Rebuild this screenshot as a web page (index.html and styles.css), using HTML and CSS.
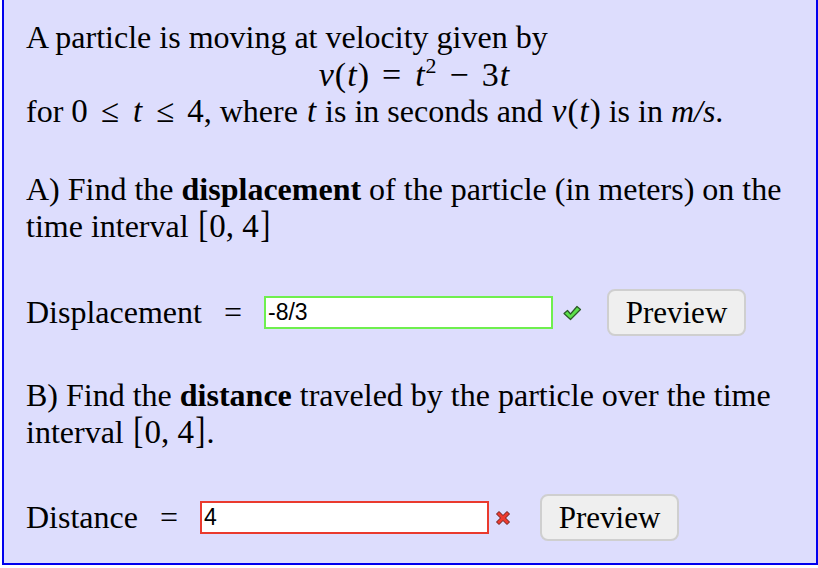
FILE: index.html
```html
<!DOCTYPE html>
<html>
<head>
<meta charset="utf-8">
<link rel="stylesheet" href="styles.css">
</head>
<body>
<div class="problem">
  <p class="intro">A particle is moving at velocity given by
    <span class="display"><span class="mi">v</span>(<span class="mi">t</span>)<span class="rel">=</span><span class="mi">t</span><sup>2</sup><span class="bin">−</span>3<span class="mi">t</span></span>
    for <span class="math">0<span class="rel">≤</span><span class="mi">t</span><span class="rel">≤</span>4</span>, where <span class="math"><span class="mi">t</span></span> is in seconds and <span class="math"><span class="mi">v</span>(<span class="mi">t</span>)</span> is in <i>m/s</i>.</p>

  <p class="part">A) Find the <b>displacement</b> of the particle (in meters) on the time interval <span class="math"><span class="br">[</span>0, 4<span class="br">]</span></span></p>

  <div class="answer-row">
    <span class="label">Displacement</span><span class="rel">=</span>
    <input class="answer correct" type="text" value="-8/3">
    <svg class="mark" width="20" height="18" viewBox="0 0 20 18"><path d="M2 9.5 L5.5 6.5 L8.5 10 L15 2.5 L18.5 5.5 L8.5 15.5 Z" fill="#5be04a" stroke="#2c5a28" stroke-width="1.2" stroke-linejoin="round"/></svg>
    <button class="preview">Preview</button>
  </div>

  <p class="part">B) Find the <b>distance</b> traveled by the particle over the time interval <span class="math"><span class="br">[</span>0, 4<span class="br">]</span></span>.</p>

  <div class="answer-row last">
    <span class="label">Distance</span><span class="rel">=</span>
    <input class="answer wrong" type="text" value="4">
    <svg class="mark cross" width="16" height="16" viewBox="0 0 16 16"><path d="M1.5 4 L4 1.5 L8 5.5 L12 1.5 L14.5 4 L10.5 8 L14.5 12 L12 14.5 L8 10.5 L4 14.5 L1.5 12 L5.5 8 Z" fill="#ee3b2f" stroke="#6a1a14" stroke-width="1" stroke-linejoin="round"/></svg>
    <button class="preview">Preview</button>
  </div>
</div>
</body>
</html>
```

FILE: styles.css
```css
html, body {
  margin: 0;
  padding: 0;
  background: #ffffff;
}

.problem {
  margin-left: 2px;
  width: 768px;
  height: 544px;
  background: #ddddfd;
  border: 2px solid #0000ee;
  border-top: none;
  padding: 19px 22px 0 22px;
  box-sizing: content-box;
  font-family: "Liberation Serif", "Times New Roman", serif;
  font-size: 32px;
  line-height: 37px;
  color: #000;
}

p {
  margin: 0;
}

.display {
  display: block;
  text-align: center;
  margin-left: 8px;
  font-size: 34px;
}

.display .bin {
  margin: 0 13px;
}

.math {
  font-size: 33px;
}

.mi {
  font-style: italic;
  padding: 0 1px;
}

.rel {
  margin: 0 13px;
}

.bin {
  margin: 0 11px;
}

sup {
  font-size: 22px;
  line-height: 0;
  vertical-align: 13px;
}

.br {
  display: inline-block;
  font-size: 38px;
  line-height: 30px;
  transform: scaleX(0.8);
}

.part {
  margin-top: 41px;
}

.answer-row {
  display: flex;
  align-items: center;
  height: 47px;
  margin-top: 44px;
  margin-bottom: 40px;
}

.answer-row.last {
  margin-top: 43px;
  margin-bottom: 0;
}

.answer-row .rel {
  margin: 0 22px;
}

.answer {
  width: 289px;
  height: 33px;
  box-sizing: border-box;
  border: 2px solid;
  padding: 0 2px;
  margin: 0;
  font-family: "Liberation Sans", Arial, sans-serif;
  font-size: 23px;
  color: #000;
  background: #fff;
  outline: none;
}

.answer.correct {
  border-color: #6fef4f;
}

.answer.wrong {
  border-color: #ea3a2e;
}

.mark {
  margin-left: 9px;
  margin-right: 25px;
}

.mark.cross {
  margin-left: 6px;
  margin-right: 29px;
}

.preview {
  width: 139px;
  height: 47px;
  box-sizing: border-box;
  background: #efefef;
  border: 2px solid #cfcfcf;
  border-radius: 8px;
  font-family: "Liberation Serif", "Times New Roman", serif;
  font-size: 31px;
  color: #000;
  padding: 0;
}
```
